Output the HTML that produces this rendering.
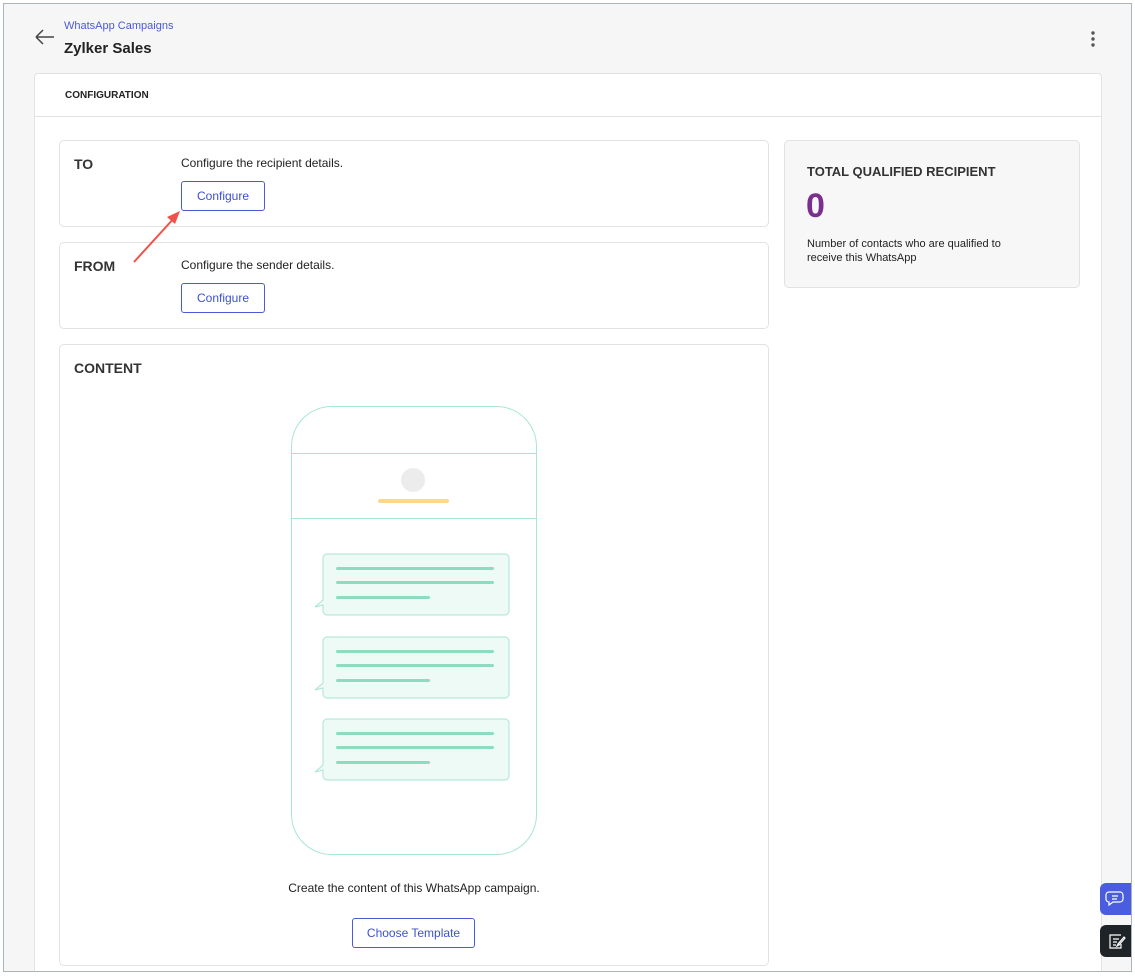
<html><head><style>
body{margin:0;width:1135px;height:976px;background:#fff;font-family:"Liberation Sans",sans-serif;overflow:hidden;position:relative}
.frame{position:absolute;left:3px;top:3px;width:1127px;height:967px;border:1px solid #a9b4bd;background:#f6f6f6;overflow:hidden}
.a{position:absolute}
.card{position:absolute;background:#fff;border:1px solid #e2e2e2;border-radius:5px}
.btn{position:absolute;border:1px solid #4a5ad8;border-radius:3px;color:#3d4fd4;font-size:12px;text-align:center;background:#fff}
.lbl{position:absolute;font-weight:bold;font-size:14px;color:#333}
.txt{position:absolute;font-size:12px;color:#222}
</style></head><body>
<div class="frame">
<svg class="a" style="left:30px;top:24px" width="22" height="18"><path d="M2 9H20M2 9L9 2M2 9L9 16" stroke="#444" stroke-width="1.5" fill="none"/></svg>
<div class="a" style="left:60px;top:16px;font-size:11px;color:#4a5ad8">WhatsApp Campaigns</div>
<div class="a" style="left:60px;top:36px;font-size:15px;font-weight:bold;color:#222">Zylker Sales</div>
<svg class="a" style="left:1085px;top:26px" width="8" height="18"><circle cx="4" cy="3" r="1.7" fill="#555"/><circle cx="4" cy="9" r="1.7" fill="#555"/><circle cx="4" cy="15" r="1.7" fill="#555"/></svg>
<div class="card" style="left:30px;top:69px;width:1066px;height:920px;border-radius:4px">
 <div class="a" style="left:0;top:0;width:1066px;height:42px;border-bottom:1px solid #e2e2e2"></div>
 <div class="a" style="left:30px;top:16px;font-size:10px;font-weight:bold;color:#222">CONFIGURATION</div>
</div>
<div class="card" style="left:55px;top:136px;width:708px;height:85px">
 <div class="lbl" style="left:14px;top:15px">TO</div>
 <div class="txt" style="left:121px;top:15px">Configure the recipient details.</div>
 <div class="btn" style="left:121px;top:40px;width:82px;height:28px;line-height:28px">Configure</div>
</div>
<div class="card" style="left:55px;top:238px;width:708px;height:85px">
 <div class="lbl" style="left:14px;top:15px">FROM</div>
 <div class="txt" style="left:121px;top:15px">Configure the sender details.</div>
 <div class="btn" style="left:121px;top:40px;width:82px;height:28px;line-height:28px">Configure</div>
</div>
<svg class="a" style="left:125px;top:200px" width="60" height="65"><path d="M5 58L47 12" stroke="#f0524a" stroke-width="2"/><path d="M51 7L38 13L46 20Z" fill="#f0524a"/></svg>
<div class="card" style="left:55px;top:340px;width:708px;height:620px">
 <div class="lbl" style="left:14px;top:15px">CONTENT</div>
 <svg class="a" style="left:230px;top:60px" width="250" height="452">
  <rect x="1.5" y="1.5" width="245" height="448" rx="40" fill="#fff" stroke="#a8e6d0"/>
  <line x1="1.5" y1="48.5" x2="246.5" y2="48.5" stroke="#a8e6d0"/>
  <line x1="1.5" y1="113.5" x2="246.5" y2="113.5" stroke="#a8e6d0"/>
  <circle cx="123" cy="75" r="12" fill="#ececec"/>
  <rect x="88" y="94" width="71" height="4" rx="2" fill="#fbd88a"/>
  <g id="b"><path d="M37 149H215a4 4 0 0 1 4 4V206a4 4 0 0 1-4 4H37a4 4 0 0 1-4-4V200L25 202L33 195V153a4 4 0 0 1 4-4z" fill="#eefaf5" stroke="#a8e6d0"/>
  <rect x="46" y="162" width="158" height="3" rx="1.5" fill="#8edcc0"/><rect x="46" y="176" width="158" height="3" rx="1.5" fill="#8edcc0"/><rect x="46" y="191" width="94" height="3" rx="1.5" fill="#8edcc0"/></g>
  <use href="#b" y="83"/><use href="#b" y="165"/>
 </svg>
 <div class="txt" style="left:0;width:708px;text-align:center;top:536px">Create the content of this WhatsApp campaign.</div>
 <div class="btn" style="left:292px;top:573px;width:121px;height:28px;line-height:28px">Choose Template</div>
</div>
<div class="card" style="left:780px;top:136px;width:294px;height:146px;background:#f7f7f7">
 <div class="a" style="left:22px;top:23px;font-size:13px;font-weight:bold;color:#333">TOTAL QUALIFIED RECIPIENT</div>
 <div class="a" style="left:21px;top:46px;font-size:34px;font-weight:bold;color:#7a2f8f">0</div>
 <div class="a" style="left:22px;top:96px;font-size:11px;color:#222;width:225px;line-height:14px">Number of contacts who are qualified to receive this WhatsApp</div>
</div>
<div class="a" style="left:1096px;top:879px;width:32px;height:32px;background:#4a5ce0;border-radius:6px 0 0 6px">
<svg width="32" height="32"><path d="M9 9h11a3 3 0 0 1 3 3v4a3 3 0 0 1-3 3h-7l-4 3v-3a3 3 0 0 1-3-3v-4a3 3 0 0 1 3-3z M12 13h6M12 16h5" stroke="#fff" fill="none" stroke-width="1.2"/></svg></div>
<div class="a" style="left:1096px;top:921px;width:32px;height:32px;background:#1e2327;border-radius:6px 0 0 6px">
<svg width="32" height="32"><path d="M21 10H10v13h11v-4M13 14h6M13 17h4M13 20h3M24 12l-6 7-1 2 2-1 6-7z" stroke="#fff" fill="none" stroke-width="1.2"/></svg></div>
</div>
</body></html>
